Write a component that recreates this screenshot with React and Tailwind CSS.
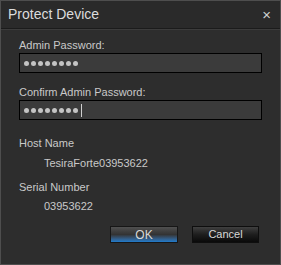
import React from 'react';

const font = { fontFamily: '"Liberation Sans", Arial, sans-serif' };

function PasswordField({ count = 8, caret = false }) {
  return (
    <div className="mt-[1px] h-[20px] w-[243px] border border-black bg-[#3b3b3b] flex items-center pl-[4px]">
      <div className="flex items-center gap-[2px]">
        {Array.from({ length: count }).map((_, i) => (
          <span key={i} className="block w-[5px] h-[5px] rounded-full bg-[#c4c4c4]" />
        ))}
        {caret && <span className="block w-[1px] h-[13px] bg-[#d0d0d0] ml-[1px]" />}
      </div>
    </div>
  );
}

export default function App() {
  return (
    <div className="w-[281px] h-[265px] bg-[#2d2d2d] border border-[#4e4e4e] flex flex-col text-[#c9c9c9]" style={font}>
      <div className="h-[28px] shrink-0 bg-[#2a2a2a] flex items-center justify-between pl-[7px] pr-[9px] border-b border-[#1b1b1b]">
        <span className="text-[14px] text-[#dcdcdc]">Protect Device</span>
        <span className="text-[15px] text-[#d0d0d0] leading-none">×</span>
      </div>
      <div className="h-px bg-[#3c3c3c]" />
      <div className="flex flex-col pl-[18px] pt-[8px]">
        <label className="text-[11px] leading-[14px]">Admin Password:</label>
        <PasswordField />
        <label className="text-[11px] leading-[14px] mt-[12px]">Confirm Admin Password:</label>
        <PasswordField caret />
        <div className="text-[11px] leading-[14px] mt-[16px]">Host Name</div>
        <div className="text-[11px] leading-[14px] mt-[6px] pl-[25px]">TesiraForte03953622</div>
        <div className="text-[11px] leading-[14px] mt-[10px]">Serial Number</div>
        <div className="text-[11px] leading-[14px] mt-[5px] pl-[25px]">03953622</div>
        <div className="flex gap-[14px] mt-[13px] pl-[91px]">
          <button className="w-[68px] h-[17px] border border-[#161616] bg-gradient-to-b from-[#505050] via-[#333333] to-[#1f7ccc] text-[12px] text-[#d8d8d8] flex items-center justify-center leading-none">
            OK
          </button>
          <button className="w-[67px] h-[17px] border border-[#0e0e0e] bg-gradient-to-b from-[#404040] via-[#1e1e1e] to-[#0a0a0a] text-[11px] text-[#d8d8d8] flex items-center justify-center leading-none">
            Cancel
          </button>
        </div>
      </div>
    </div>
  );
}
